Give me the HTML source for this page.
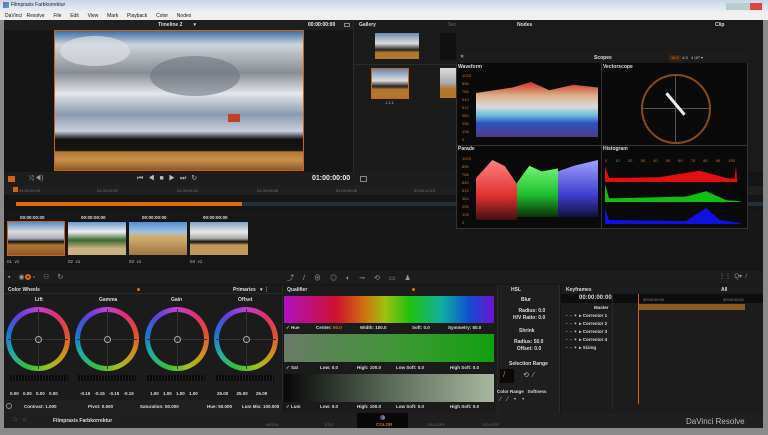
<!DOCTYPE html>
<html><head><meta charset="utf-8"><style>
*{margin:0;padding:0;box-sizing:border-box}
body{width:768px;height:435px;overflow:hidden;background:#8a8a8a;font-family:"Liberation Sans",sans-serif;font-size:5px;color:#bbb;position:relative}
.a{position:absolute}
.t{position:absolute;white-space:nowrap;font-size:5px;color:#bbb}
.w{color:#ddd;font-weight:bold}
.wheel{position:absolute;width:64px;height:64px;border-radius:50%;background:conic-gradient(from 0deg,#c040d0,#e03070,#e05030,#d09020,#a0c020,#30c040,#20b0a0,#2070d0,#6040e0,#c040d0)}
.wheel:after{content:"";position:absolute;left:5px;top:5px;width:54px;height:54px;border-radius:50%;background:#1b1b1b}
.cross{position:absolute;background:#333}
.ring{position:absolute;width:7px;height:7px;border:1px solid #aaa;border-radius:50%}
.ru{position:absolute;top:188px;font-size:4px;color:#777;white-space:nowrap}
</style></head><body>
<div class="a" style="left:0;top:0;width:768px;height:11px;background:linear-gradient(#c9d6e6,#e6eef7)"></div>
<div class="t" style="left:11px;top:2px;color:#222">Filmpraxis Farbkorrektur</div>
<div class="a" style="left:3px;top:2px;width:6px;height:6px;background:linear-gradient(135deg,#e44,#48e,#4c4)"></div>
<div class="a" style="left:726px;top:3px;width:36px;height:7px;background:linear-gradient(90deg,#bcc 0 33%,#bcc 33% 66%,#d44 66%)"></div>
<div class="a" style="left:0;top:11px;width:768px;height:9px;background:#f0f0f0"></div>
<div class="t" style="left:5px;top:13px;color:#111;word-spacing:3px">DaVinci Resolve &nbsp;File &nbsp;Edit &nbsp;View &nbsp;Mark &nbsp;Playback &nbsp;Color &nbsp;Nodes</div>
<div class="a" style="left:4px;top:20px;width:759px;height:408px;background:#151515"></div>
<div class="a" style="left:4px;top:20px;width:349px;height:10px;background:#1e1e1e"></div>
<div class="t w" style="left:158px;top:22px">Timeline 2 &nbsp;&nbsp;&nbsp;&nbsp;&nbsp;&nbsp;&nbsp;▾</div>
<div class="t w" style="left:308px;top:22px;color:#eee">00:00:00:00</div>
<div class="a" style="left:344px;top:23px;width:6px;height:4px;border:1px solid #888"></div>
<div class="a" style="left:54px;top:30px;width:250px;height:141px;border:1px solid #d0621a;background:linear-gradient(#3a6ea8 0%,#cfd4da 10%,#888c94 30%,#e4e6ea 45%,#8a9ab0 60%,#c8d0dc 72%,#101010 78%,#181810 86%,#b07a38 87%,#c99048 93%,#8a5a28 100%)"></div>
<div class="a" style="left:60px;top:36px;width:70px;height:30px;border-radius:50%;background:#dcdee2;opacity:.7"></div>
<div class="a" style="left:150px;top:56px;width:90px;height:40px;border-radius:50%;background:#707680;opacity:.6"></div>
<div class="a" style="left:228px;top:114px;width:12px;height:8px;background:#c0402a"></div>
<div class="a" style="left:353px;top:20px;width:103px;height:152px;background:#1b1b1b;border-left:1px solid #2a2a2a"></div>
<div class="t w" style="left:359px;top:22px">Gallery</div>
<div class="t" style="left:448px;top:22px;color:#666">Search</div>
<div class="a" style="left:375px;top:33px;width:44px;height:26px;background:linear-gradient(#6a8ab0,#ddd 40%,#222 65%,#b0762e 75%)"></div>
<div class="a" style="left:440px;top:33px;width:45px;height:27px;background:#111"></div>
<div class="a" style="left:353px;top:64px;width:103px;height:1px;background:#2a2a2a"></div>
<div class="a" style="left:371px;top:68px;width:38px;height:31px;border:1px solid #d0621a;background:linear-gradient(#6a8ab0,#ddd 40%,#222 60%,#b0762e 70%)"></div>
<div class="t" style="left:385px;top:100px;font-size:4px">1.2.1</div>
<div class="a" style="left:440px;top:68px;width:16px;height:30px;background:linear-gradient(#ddd,#aaa 50%,#b0762e 70%)"></div>
<div class="a" style="left:456px;top:20px;width:307px;height:152px;background:#1a1a1a"></div>
<div class="t w" style="left:517px;top:22px">Nodes</div>
<div class="t w" style="left:715px;top:22px">Clip</div>
<div class="a" style="left:4px;top:172px;width:452px;height:14px;background:#1d1d1d"></div>
<div class="a" style="left:8px;top:176px;width:7px;height:6px;background:#d0621a"></div>
<div class="t" style="left:28px;top:175px;font-size:7px;color:#999">⤨ ◀)</div>
<div class="t" style="left:137px;top:174px;font-size:7px;color:#bbb;letter-spacing:5px">⏮◀■▶⏭↻</div>
<div class="t w" style="left:312px;top:175px;font-size:7px;color:#eee">01:00:00:00</div>
<div class="a" style="left:360px;top:176px;width:7px;height:6px;border:1px solid #888"></div>
<div class="a" style="left:4px;top:186px;width:759px;height:9px;background:#1f1f1f"></div>
<div class="ru" style="left:19px">01:00:00:00</div>
<div class="ru" style="left:97px">01:00:02:02</div>
<div class="ru" style="left:177px">01:00:04:04</div>
<div class="ru" style="left:257px">01:00:06:06</div>
<div class="ru" style="left:336px">01:00:08:08</div>
<div class="ru" style="left:414px">01:00:10:10</div>
<div class="a" style="left:13px;top:187px;width:5px;height:5px;background:#d0621a"></div>
<div class="a" style="left:16px;top:202px;width:226px;height:4px;background:#e06a10"></div>
<div class="a" style="left:242px;top:202px;width:521px;height:4px;background:#243038"></div>
<div class="a" style="left:4px;top:210px;width:759px;height:58px;background:#171717"></div>
<div class="t w" style="left:20px;top:215px;font-size:4.5px">00:00:00:00</div>
<div class="t w" style="left:81px;top:215px;font-size:4.5px">00:00:00:00</div>
<div class="t w" style="left:142px;top:215px;font-size:4.5px">00:00:00:00</div>
<div class="t w" style="left:203px;top:215px;font-size:4.5px">00:00:00:00</div>
<div class="a" style="left:7px;top:221px;width:58px;height:35px;border:1px solid #d0621a;background:linear-gradient(#5a8ac0,#ddd 30%,#aab 50%,#111 60%,#b0762e 70%,#8a5828)"></div>
<div class="a" style="left:68px;top:222px;width:58px;height:33px;background:linear-gradient(#6a9ad0,#eee 30%,#3a6a30 55%,#cbb080 80%)"></div>
<div class="a" style="left:129px;top:222px;width:58px;height:33px;background:linear-gradient(#5090d0,#a0c0e0 30%,#d0b070 45%,#a07840)"></div>
<div class="a" style="left:190px;top:222px;width:58px;height:33px;background:linear-gradient(#80a0c0,#e8e8e8 30%,#aaa 50%,#111 60%,#c09858 70%)"></div>
<div class="t" style="left:7px;top:259px;font-size:4.5px">01 &nbsp;v1</div>
<div class="t" style="left:68px;top:259px;font-size:4.5px">02 &nbsp;v1</div>
<div class="t" style="left:129px;top:259px;font-size:4.5px">03 &nbsp;v1</div>
<div class="t" style="left:190px;top:259px;font-size:4.5px">04 &nbsp;v1</div>
<div class="a" style="left:456px;top:52px;width:292px;height:177px;background:#0a0a0a;border:1px solid #333"></div>
<div class="a" style="left:456px;top:52px;width:292px;height:11px;background:#1c1c1c"></div>
<div class="t" style="left:460px;top:54px;color:#ccc">✕</div>
<div class="t w" style="left:594px;top:55px">Scopes</div>
<div class="a" style="left:669px;top:55px;width:12px;height:6px;background:#3a2410"></div>
<div class="t" style="left:671px;top:55px;color:#e07020;font-size:4px">16:9 &nbsp;&nbsp;<span style="color:#ccc">4:3 &nbsp;&nbsp;4 UP ▾</span></div>
<div class="a" style="left:601px;top:63px;width:1px;height:165px;background:#333"></div>
<div class="a" style="left:457px;top:145px;width:290px;height:1px;background:#333"></div>
<div class="t w" style="left:458px;top:64px">Waveform</div>
<div class="t w" style="left:603px;top:64px">Vectorscope</div>
<div class="t w" style="left:458px;top:146px">Parade</div>
<div class="t w" style="left:603px;top:146px">Histogram</div>
<div class="t" style="left:462px;top:72px;color:#d07020;font-size:4px;line-height:8px">1023<br>896<br>768<br>640<br>512<br>384<br>256<br>128<br>0</div>
<div class="a" style="left:476px;top:82px;width:122px;height:55px;background:linear-gradient(#f03a20 0%,#ffd0a0 25%,#fff 45%,#80e0ff 60%,#3060e0 75%,#6040a0 100%);opacity:.85;clip-path:polygon(0 20%,30% 10%,45% 0,60% 15%,80% 5%,100% 10%,100% 100%,0 100%)"></div>
<div class="a" style="left:641px;top:74px;width:70px;height:70px;border:2px solid #8a4a18;border-radius:50%"></div>
<div class="a" style="left:675px;top:75px;width:1px;height:68px;background:#555"></div>
<div class="a" style="left:642px;top:108px;width:68px;height:1px;background:#555"></div>
<div class="a" style="left:674px;top:90px;width:3px;height:28px;background:#eee;transform:rotate(-40deg)"></div>
<div class="t" style="left:462px;top:155px;color:#d07020;font-size:4px;line-height:8px">1023<br>896<br>768<br>640<br>512<br>384<br>256<br>128<br>0</div>
<div class="a" style="left:476px;top:160px;width:41px;height:60px;background:linear-gradient(#ff8080,#e03030 60%,#401010);clip-path:polygon(0 30%,40% 0,70% 10%,100% 40%,100% 100%,0 100%)"></div>
<div class="a" style="left:517px;top:160px;width:41px;height:57px;background:linear-gradient(#80ff80,#20c030 60%,#0a300a);clip-path:polygon(0 40%,30% 10%,60% 20%,100% 15%,100% 100%,0 100%)"></div>
<div class="a" style="left:558px;top:160px;width:40px;height:57px;background:linear-gradient(#a0a0ff,#4040d0 60%,#101040);clip-path:polygon(0 20%,40% 10%,100% 0,100% 100%,0 100%)"></div>
<div class="t" style="left:605px;top:158px;color:#d07020;font-size:4px;word-spacing:7px">0 10 20 30 40 50 60 70 80 90 100</div>
<div class="a" style="left:605px;top:166px;width:135px;height:16px;background:#e01010;clip-path:polygon(0 0,3% 75%,40% 70%,70% 30%,90% 75%,96% 80%,97% 0,98% 100%,0 100%)"></div>
<div class="a" style="left:605px;top:184px;width:135px;height:18px;background:#10c010;clip-path:polygon(0 0,3% 80%,60% 70%,75% 40%,90% 90%,100% 95%,100% 100%,0 100%)"></div>
<div class="a" style="left:605px;top:204px;width:135px;height:20px;background:#1010e0;clip-path:polygon(0 20%,3% 80%,60% 85%,75% 20%,85% 80%,100% 95%,100% 100%,0 100%)"></div>
<div class="a" style="left:4px;top:270px;width:759px;height:14px;background:#1c1c1c"></div>
<div class="t" style="left:8px;top:273px;font-size:7px;color:#999;letter-spacing:8px">▪◉▫⚇↻</div>
<div class="a" style="left:25px;top:274px;width:6px;height:6px;border-radius:50%;border:2px solid #e06a10"></div>
<div class="t" style="left:287px;top:273px;font-size:7px;color:#999;letter-spacing:9px">⤴/⊕◎◐⊸⟲▭♟</div>
<div class="t" style="left:719px;top:273px;font-size:6px;color:#999">⋮⋮ &nbsp;Q▾ &nbsp;/</div>
<div class="a" style="left:4px;top:285px;width:279px;height:128px;background:#1b1b1b;border-right:1px solid #2a2a2a"></div>
<div class="t w" style="left:8px;top:287px">Color Wheels</div>
<div class="t w" style="left:233px;top:287px">Primaries &nbsp;&nbsp;▾ ⋮</div>
<div class="a" style="left:137px;top:288px;width:3px;height:3px;border-radius:50%;background:#e06a10"></div>
<div class="a" style="left:4px;top:293px;width:279px;height:1px;background:#2a2a2a"></div>
<div class="t w" style="left:35px;top:297px">Lift</div>
<div class="t w" style="left:99px;top:297px">Gamma</div>
<div class="t w" style="left:171px;top:297px">Gain</div>
<div class="t w" style="left:238px;top:297px">Offset</div>
<div class="wheel" style="left:6px;top:307px"></div>
<div class="wheel" style="left:75px;top:307px"></div>
<div class="wheel" style="left:145px;top:307px"></div>
<div class="wheel" style="left:214px;top:307px"></div>
<div class="cross" style="left:8px;top:339px;width:60px;height:1px"></div><div class="cross" style="left:38px;top:309px;width:1px;height:60px"></div>
<div class="cross" style="left:77px;top:339px;width:60px;height:1px"></div><div class="cross" style="left:107px;top:309px;width:1px;height:60px"></div>
<div class="cross" style="left:147px;top:339px;width:60px;height:1px"></div><div class="cross" style="left:177px;top:309px;width:1px;height:60px"></div>
<div class="cross" style="left:216px;top:339px;width:60px;height:1px"></div><div class="cross" style="left:246px;top:309px;width:1px;height:60px"></div>
<div class="ring" style="left:35px;top:336px"></div><div class="ring" style="left:104px;top:336px"></div><div class="ring" style="left:174px;top:336px"></div><div class="ring" style="left:243px;top:336px"></div>
<div class="a" style="left:10px;top:375px;width:58px;height:6px;background:repeating-linear-gradient(90deg,#0a0a0a 0 2px,#222 2px 3px)"></div>
<div class="a" style="left:78px;top:375px;width:58px;height:6px;background:repeating-linear-gradient(90deg,#0a0a0a 0 2px,#222 2px 3px)"></div>
<div class="a" style="left:147px;top:375px;width:58px;height:6px;background:repeating-linear-gradient(90deg,#0a0a0a 0 2px,#222 2px 3px)"></div>
<div class="a" style="left:216px;top:375px;width:58px;height:6px;background:repeating-linear-gradient(90deg,#0a0a0a 0 2px,#222 2px 3px)"></div>
<div class="t w" style="left:10px;top:391px;font-size:4.5px;word-spacing:3px">0.00 0.00 0.00 0.00</div>
<div class="t w" style="left:80px;top:391px;font-size:4.5px;word-spacing:3px">-0.15 -0.15 -0.15 -0.15</div>
<div class="t w" style="left:150px;top:391px;font-size:4.5px;word-spacing:3px">1.00 1.00 1.00 1.00</div>
<div class="t w" style="left:217px;top:391px;font-size:4.5px;word-spacing:7px">25.00 25.00 25.00</div>
<div class="a" style="left:4px;top:400px;width:279px;height:13px;background:#202020"></div>
<div class="t w" style="left:24px;top:404px;font-size:4.5px">Contrast: 1.000</div>
<div class="t w" style="left:88px;top:404px;font-size:4.5px">Pivot: 0.500</div>
<div class="t w" style="left:140px;top:404px;font-size:4.5px">Saturation: 50.000</div>
<div class="t w" style="left:207px;top:404px;font-size:4.5px">Hue: 50.000</div>
<div class="t w" style="left:242px;top:404px;font-size:4.5px">Lum Mix: 100.000</div>
<div class="a" style="left:6px;top:403px;width:6px;height:6px;border:1px solid #888;border-radius:50%"></div>
<div class="a" style="left:284px;top:285px;width:213px;height:128px;background:#1b1b1b"></div>
<div class="t w" style="left:287px;top:287px">Qualifier</div>
<div class="a" style="left:412px;top:288px;width:3px;height:3px;border-radius:50%;background:#e06a10"></div>
<div class="a" style="left:284px;top:296px;width:210px;height:27px;background:linear-gradient(90deg,#b010c0,#d01030 25%,#d07010 38%,#a0c010 48%,#20c010 60%,#10b0a0 75%,#1050d0 88%,#7010d0)"></div>
<div class="t w" style="left:286px;top:325px;font-size:4.5px">✓ Hue</div><div class="t w" style="left:316px;top:325px;font-size:4.5px">Center: <span style="color:#e06a10">50.0</span></div><div class="t w" style="left:360px;top:325px;font-size:4.5px">Width: 100.0</div><div class="t w" style="left:412px;top:325px;font-size:4.5px">Soft: 0.0</div><div class="t w" style="left:448px;top:325px;font-size:4.5px">Symmetry: 50.0</div>
<div class="a" style="left:284px;top:334px;width:210px;height:28px;background:linear-gradient(90deg,#6a7a68,#3a9a30 60%,#10a010)"></div>
<div class="t w" style="left:286px;top:365px;font-size:4.5px">✓ Sat</div><div class="t w" style="left:320px;top:365px;font-size:4.5px">Low: 0.0</div><div class="t w" style="left:357px;top:365px;font-size:4.5px">High: 100.0</div><div class="t w" style="left:396px;top:365px;font-size:4.5px">Low Soft: 0.0</div><div class="t w" style="left:450px;top:365px;font-size:4.5px">High Soft: 0.0</div>
<div class="a" style="left:284px;top:374px;width:210px;height:28px;background:linear-gradient(90deg,#080808,#5a6a58 50%,#a8b8a0)"></div>
<div class="t w" style="left:286px;top:404px;font-size:4.5px">✓ Lum</div><div class="t w" style="left:320px;top:404px;font-size:4.5px">Low: 0.0</div><div class="t w" style="left:357px;top:404px;font-size:4.5px">High: 100.0</div><div class="t w" style="left:396px;top:404px;font-size:4.5px">Low Soft: 0.0</div><div class="t w" style="left:450px;top:404px;font-size:4.5px">High Soft: 0.0</div>
<div class="a" style="left:497px;top:285px;width:63px;height:128px;background:#1e1e1e;border-left:1px solid #2a2a2a;border-right:1px solid #2a2a2a"></div>
<div class="t w" style="left:511px;top:287px">HSL</div>
<div class="t w" style="left:521px;top:297px">Blur</div>
<div class="t w" style="left:513px;top:308px;line-height:7px;text-align:right">Radius: 0.0<br>H/V Ratio: 0.0</div>
<div class="t w" style="left:519px;top:328px">Shrink</div>
<div class="t w" style="left:514px;top:339px;line-height:7px">Radius: 50.0<br>&nbsp;&nbsp;Offset: 0.0</div>
<div class="t w" style="left:509px;top:361px">Selection Range</div>
<div class="a" style="left:500px;top:369px;width:14px;height:14px;background:#0a0a0a"></div>
<div class="t" style="left:503px;top:370px;font-size:8px;color:#e06a10">/</div>
<div class="t" style="left:523px;top:371px;font-size:7px;color:#bbb">⟲ &nbsp;⁄</div>
<div class="t w" style="left:497px;top:389px;font-size:4.5px">Color Range &nbsp;&nbsp;Softness</div>
<div class="t" style="left:500px;top:397px;font-size:6px;color:#bbb;letter-spacing:6px">⁄⁄••</div>
<div class="a" style="left:561px;top:285px;width:202px;height:128px;background:#1c1c1c"></div>
<div class="t w" style="left:566px;top:287px">Keyframes</div>
<div class="t w" style="left:721px;top:287px">All</div>
<div class="a" style="left:561px;top:294px;width:77px;height:9px;background:#0d0d0d"></div>
<div class="t w" style="left:579px;top:295px;font-size:6px;color:#ddd">00:00:00:00</div>
<div class="a" style="left:638px;top:294px;width:125px;height:9px;background:#0d0d0d"></div>
<div class="t" style="left:643px;top:297px;font-size:4px;color:#888">00:00:00:00</div>
<div class="t" style="left:723px;top:297px;font-size:4px;color:#888">00:00:00:01</div>
<div class="a" style="left:638px;top:294px;width:1px;height:110px;background:#d0621a"></div>
<div class="a" style="left:639px;top:304px;width:106px;height:6px;background:#8a5a20"></div>
<div class="a" style="left:612px;top:294px;width:1px;height:115px;background:#2a2a2a"></div>
<div class="t w" style="left:594px;top:305px;font-size:4.5px">Master</div>
<div class="t w" style="left:566px;top:312px;font-size:4.5px;line-height:8px"><span style="color:#e06a10">•</span> &nbsp;▫ &nbsp;+ &nbsp;▸ Corrector 1<br><span style="color:#e06a10">•</span> &nbsp;▫ &nbsp;+ &nbsp;▸ Corrector 2<br><span style="color:#e06a10">•</span> &nbsp;▫ &nbsp;+ &nbsp;▸ Corrector 3<br><span style="color:#e06a10">•</span> &nbsp;▫ &nbsp;+ &nbsp;▸ Corrector 4<br><span style="color:#e06a10">•</span> &nbsp;▫ &nbsp;+ &nbsp;▸ Sizing</div>
<div class="a" style="left:4px;top:413px;width:759px;height:15px;background:#1f1f1f"></div>
<div class="t" style="left:13px;top:416px;font-size:7px;color:#666">⌂ &nbsp;☼</div>
<div class="t w" style="left:53px;top:418px">Filmpraxis Farbkorrektur</div>
<div class="t" style="left:266px;top:422px;font-size:4px;color:#666">MEDIA</div>
<div class="t" style="left:325px;top:422px;font-size:4px;color:#666">EDIT</div>
<div class="a" style="left:357px;top:413px;width:51px;height:15px;background:#080808"></div>
<div class="a" style="left:380px;top:415px;width:5px;height:5px;border-radius:50%;background:conic-gradient(#e33,#3c3,#33e,#e33)"></div>
<div class="t" style="left:376px;top:422px;font-size:4.5px;color:#e06a10;font-weight:bold">COLOR</div>
<div class="t" style="left:427px;top:422px;font-size:4px;color:#666">GALLERY</div>
<div class="t" style="left:482px;top:422px;font-size:4px;color:#666">DELIVER</div>
<div class="t" style="left:686px;top:417px;font-size:8px;color:#bbb">DaVinci Resolve</div>
</body></html>
